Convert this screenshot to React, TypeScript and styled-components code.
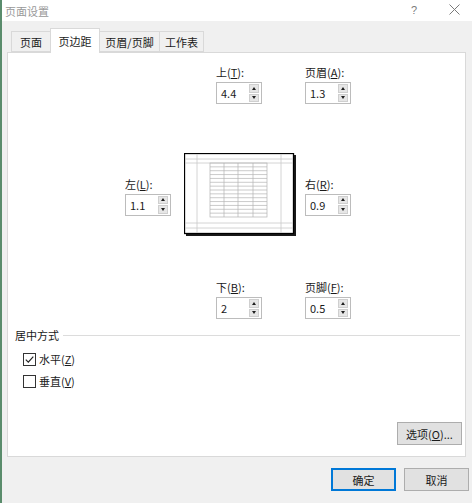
import React from 'react';
import styled, { createGlobalStyle } from 'styled-components';

const GlobalStyle = createGlobalStyle`
  html, body {
    margin: 0;
    padding: 0;
    background: #ffffff;
  }
  body {
    font-family: "Noto Sans CJK SC", "Liberation Sans", sans-serif;
    font-size: 11px;
    color: #1a1a1a;
  }
`;

interface FieldProps {
  name: string;
  hotkey: string;
  value: string;
  col: number;
  row: number;
  center?: boolean;
}

const tabs = [
  { label: '页面', width: 40 },
  { label: '页边距', width: 50, active: true },
  { label: '页眉/页脚', width: 61 },
  { label: '工作表', width: 45 },
];

const fields: FieldProps[] = [
  { name: '上', hotkey: 'T', value: '4.4', col: 3, row: 1 },
  { name: '页眉', hotkey: 'A', value: '1.3', col: 5, row: 1 },
  { name: '左', hotkey: 'L', value: '1.1', col: 1, row: 3, center: true },
  { name: '右', hotkey: 'R', value: '0.9', col: 5, row: 3, center: true },
  { name: '下', hotkey: 'B', value: '2', col: 3, row: 5 },
  { name: '页脚', hotkey: 'F', value: '0.5', col: 5, row: 5 },
];

const SpinField = (props: FieldProps) => (
  <StyledField $col={props.col} $row={props.row} $center={props.center}>
    <StyledFieldLabel>
      {props.name}(<u>{props.hotkey}</u>):
    </StyledFieldLabel>
    <StyledSpinBox>
      <StyledSpinValue>{props.value}</StyledSpinValue>
      <StyledSpinButtons>
        <StyledSpinButton>
          <StyledArrow $up />
        </StyledSpinButton>
        <StyledSpinButton>
          <StyledArrow />
        </StyledSpinButton>
      </StyledSpinButtons>
    </StyledSpinBox>
  </StyledField>
);

// 页面预览图（表格 + 页边距线）
const PagePreview = () => {
  const rows = 14;
  const top = 10;
  const bottom = 64;
  const step = (bottom - top) / rows;
  const rowLines = [];
  for (let i = 1; i < rows; i++) {
    const y = top + step * i;
    rowLines.push(<line key={i} x1={26} y1={y} x2={83} y2={y} />);
  }
  return (
    <StyledPreview>
      <svg width="112" height="83" viewBox="0 0 112 83">
        <rect x="2" y="2" width="110" height="81" fill="#1a1a1a" />
        <rect x="0.5" y="0.5" width="109" height="80" fill="#ffffff" stroke="#000000" strokeWidth="1.3" />
        <g stroke="#c9c9c9" strokeWidth="0.8">
          <line x1="13" y1="1" x2="13" y2="80" />
          <line x1="97" y1="1" x2="97" y2="80" />
          <line x1="1" y1="6" x2="109" y2="6" />
          <line x1="1" y1="10" x2="109" y2="10" />
          <line x1="1" y1="70" x2="109" y2="70" />
          <line x1="1" y1="75" x2="109" y2="75" />
        </g>
        <g stroke="#b3b3b3" strokeWidth="0.7" fill="none">
          <rect x="26" y={top} width="57" height={bottom - top} />
          <line x1="40" y1={top} x2="40" y2={bottom} />
          <line x1="54" y1={top} x2="54" y2={bottom} />
          <line x1="69" y1={top} x2="69" y2={bottom} />
          {rowLines}
        </g>
      </svg>
    </StyledPreview>
  );
};

const CheckMark = () => (
  <svg width="11" height="11" viewBox="0 0 11 11">
    <path d="M1.8 5.6 L4.3 8.1 L9.3 2.6" fill="none" stroke="#222222" strokeWidth="1.2" />
  </svg>
);

const App = () => {
  return (
    <>
      <GlobalStyle />
      <StyledWindow>
        <StyledTitleBar>
          <StyledTitle>页面设置</StyledTitle>
          <StyledTitleHelp>?</StyledTitleHelp>
          <StyledTitleClose>
            <svg width="11" height="11" viewBox="0 0 11 11">
              <path d="M0.5 0.5 L10.5 10.5 M10.5 0.5 L0.5 10.5" stroke="#7a7a7a" strokeWidth="1" />
            </svg>
          </StyledTitleClose>
        </StyledTitleBar>
        <StyledMain>
          <StyledTabRow>
            {tabs.map((tab) => (
              <StyledTab key={tab.label} $width={tab.width} $active={tab.active}>
                {tab.label}
              </StyledTab>
            ))}
          </StyledTabRow>
          <StyledPanel>
            <StyledMarginGrid>
              {fields.map((f) => (
                <SpinField key={f.hotkey} {...f} />
              ))}
              <StyledPreviewCell>
                <PagePreview />
              </StyledPreviewCell>
            </StyledMarginGrid>
            <StyledGroupTitle>
              <span>居中方式</span>
              <StyledGroupLine />
            </StyledGroupTitle>
            <StyledCheckRow>
              <StyledCheckBox>
                <CheckMark />
              </StyledCheckBox>
              <span>
                水平(<u>Z</u>)
              </span>
            </StyledCheckRow>
            <StyledCheckRow>
              <StyledCheckBox />
              <span>
                垂直(<u>V</u>)
              </span>
            </StyledCheckRow>
            <StyledOptionsButton>
              选项(<u>O</u>)...
            </StyledOptionsButton>
          </StyledPanel>
        </StyledMain>
        <StyledFooter>
          <StyledButton $primary>确定</StyledButton>
          <StyledButton>取消</StyledButton>
        </StyledFooter>
      </StyledWindow>
    </>
  );
};

const StyledWindow = styled.div`
  width: 472px;
  height: 503px;
  box-sizing: border-box;
  display: flex;
  flex-direction: column;
  border-left: 2px solid #5a8c6c;
  background: #f0f0f0;
`;
const StyledTitleBar = styled.div`
  height: 21px;
  display: flex;
  align-items: center;
  padding-left: 3px;
  background: #ffffff;
`;
const StyledTitle = styled.div`
  flex: 1 1 auto;
  color: #999999;
  font-size: 11px;
  line-height: 16px;
`;
const StyledTitleHelp = styled.div`
  width: 8px;
  color: #7a7a7a;
  font-family: "Liberation Sans", sans-serif;
  font-size: 11px;
  line-height: 14px;
  margin-right: 30px;
  margin-top: -2px;
`;
const StyledTitleClose = styled.div`
  display: flex;
  margin-right: 12px;
  margin-top: -3px;
`;
const StyledMain = styled.div`
  display: flex;
  flex-direction: column;
  padding: 7px 6px 0 5px;
`;
const StyledTabRow = styled.div`
  height: 25px;
  display: flex;
  align-items: flex-end;
  padding-left: 5px;
  position: relative;
  z-index: 1;
`;
const StyledTab = styled.div<{ $width: number; $active?: boolean }>`
  width: ${(p) => p.$width}px;
  box-sizing: border-box;
  height: ${(p) => (p.$active ? 25 : 21)}px;
  margin-bottom: ${(p) => (p.$active ? 0 : 1)}px;
  display: flex;
  align-items: center;
  justify-content: center;
  padding-top: ${(p) => (p.$active ? 0 : 1)}px;
  background: ${(p) => (p.$active ? '#ffffff' : '#f0f0f0')};
  border: 1px solid #d9d9d9;
  border-bottom: ${(p) => (p.$active ? 'none' : '1px solid #d9d9d9')};
  margin-left: -1px;
  white-space: nowrap;
  font-size: 11px;
`;
const StyledPanel = styled.div`
  height: 405px;
  box-sizing: border-box;
  margin-top: -1px;
  display: flex;
  flex-direction: column;
  background: #ffffff;
  border: 1px solid #d9d9d9;
`;
const StyledMarginGrid = styled.div`
  display: grid;
  grid-template-columns: 46px 13px 110px 11px 46px;
  grid-template-rows: 40px 49px 83px 43px 40px;
  margin: 11px 0 0 117px;
`;
const StyledField = styled.div<{ $col: number; $row: number; $center?: boolean }>`
  grid-column: ${(p) => p.$col};
  grid-row: ${(p) => p.$row};
  justify-self: center;
  align-self: ${(p) => (p.$center ? 'center' : 'start')};
  display: flex;
  flex-direction: column;
  margin-top: ${(p) => (p.$center ? 2 : 0)}px;
`;
const StyledFieldLabel = styled.div`
  height: 16px;
  line-height: 16px;
  margin-bottom: 2px;
  white-space: nowrap;
  font-size: 11px;
`;
const StyledSpinBox = styled.div`
  width: 46px;
  height: 22px;
  box-sizing: border-box;
  display: flex;
  border: 1px solid #bcbcbc;
  background: #ffffff;
`;
const StyledSpinValue = styled.div`
  flex: 1 1 auto;
  padding-left: 4px;
  line-height: 20px;
  font-size: 11px;
`;
const StyledSpinButtons = styled.div`
  width: 10px;
  display: flex;
  flex-direction: column;
  gap: 1px;
  margin: 1px 2px 1px 0;
`;
const StyledSpinButton = styled.div`
  flex: 1 1 0;
  display: flex;
  align-items: center;
  justify-content: center;
  background: #e6e6e6;
  border: 1px solid #cfcfcf;
  box-sizing: border-box;
`;
const StyledArrow = styled.div<{ $up?: boolean }>`
  width: 0;
  height: 0;
  border-left: 2.5px solid transparent;
  border-right: 2.5px solid transparent;
  ${(p) => (p.$up ? 'border-bottom: 3px solid #1e1e1e;' : 'border-top: 3px solid #1e1e1e;')}
`;
const StyledPreviewCell = styled.div`
  grid-column: 3;
  grid-row: 3;
`;
const StyledPreview = styled.div`
  width: 112px;
  height: 83px;
  display: flex;
`;
const StyledGroupTitle = styled.div`
  height: 16px;
  margin-top: 8px;
  padding: 0 5px 0 7px;
  display: flex;
  align-items: center;
  line-height: 16px;
  white-space: nowrap;
`;
const StyledGroupLine = styled.div`
  flex: 1 1 auto;
  height: 1px;
  margin-left: 4px;
  margin-top: 1px;
  background: #dcdcdc;
`;
const StyledCheckRow = styled.div`
  height: 16px;
  margin-top: 8px;
  padding-left: 15px;
  display: flex;
  align-items: center;
  line-height: 16px;
  & + & {
    margin-top: 6px;
  }
`;
const StyledCheckBox = styled.div`
  width: 13px;
  height: 13px;
  box-sizing: border-box;
  margin-right: 3px;
  display: flex;
  align-items: center;
  justify-content: center;
  border: 1px solid #333333;
  background: #ffffff;
`;
const StyledButtonBase = styled.div`
  width: 65px;
  height: 23px;
  box-sizing: border-box;
  display: flex;
  align-items: center;
  justify-content: center;
  background: #e1e1e1;
  border: 1px solid #adadad;
  font-size: 11px;
  white-space: nowrap;
`;
const StyledOptionsButton = styled(StyledButtonBase)`
  align-self: flex-end;
  margin: 33px 3px 0 0;
`;
const StyledFooter = styled.div`
  display: flex;
  justify-content: flex-end;
  gap: 8px;
  padding: 11px 3px 0 0;
`;
const StyledButton = styled(StyledButtonBase)<{ $primary?: boolean }>`
  border-color: ${(p) => (p.$primary ? '#0078d7' : '#adadad')};
  box-shadow: ${(p) => (p.$primary ? 'inset 0 0 0 1px #0078d7' : 'none')};
`;

export default App;
